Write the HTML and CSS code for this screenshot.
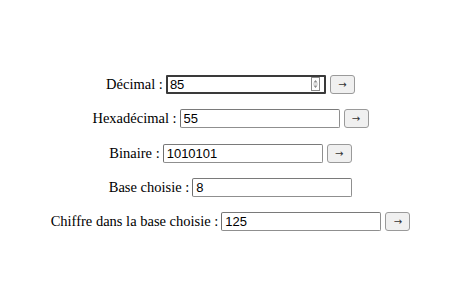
FILE: index.html
```
<!DOCTYPE html>
<html lang="fr">
<head>
<meta charset="utf-8">
<link rel="stylesheet" href="styles.css">
</head>
<body>
<div class="form">
  <div class="row">
    <label class="lbl">Décimal :</label>
    <span class="field focused">
      <input class="inp" type="text" value="85">
      <span class="spin"><svg width="9" height="14" viewBox="0 0 9 14"><rect x="0.5" y="0.5" width="8" height="13" fill="#fff" stroke="#8a8a8a"/><path d="M2.5 5.5 L4.5 3 L6.5 5.5 Z M2.5 8.5 L4.5 11 L6.5 8.5 Z" fill="#8a8a8a"/><line x1="2" y1="7" x2="7" y2="7" stroke="#c0c0c0"/></svg></span>
    </span>
    <button class="btn">→</button>
  </div>
  <div class="row">
    <label class="lbl">Hexadécimal :</label>
    <span class="field"><input class="inp" type="text" value="55"></span>
    <button class="btn">→</button>
  </div>
  <div class="row">
    <label class="lbl">Binaire :</label>
    <span class="field"><input class="inp" type="text" value="1010101"></span>
    <button class="btn">→</button>
  </div>
  <div class="row">
    <label class="lbl">Base choisie :</label>
    <span class="field"><input class="inp" type="text" value="8"></span>
  </div>
  <div class="row">
    <label class="lbl">Chiffre dans la base choisie :</label>
    <span class="field"><input class="inp" type="text" value="125"></span>
    <button class="btn">→</button>
  </div>
</div>
</body>
</html>
```
FILE: styles.css
```
html, body {
  margin: 0;
  padding: 0;
  background: #ffffff;
}
body {
  width: 474px;
  height: 283px;
  overflow: hidden;
  font-family: "Liberation Serif", "Times New Roman", serif;
  font-size: 14.5px;
  color: #000;
}
.form {
  display: flex;
  flex-direction: column;
  align-items: center;
  gap: 15.3px;
  padding-top: 75px;
  padding-right: 13px;
}
.row {
  display: flex;
  align-items: center;
  height: 19px;
}
.lbl {
  margin-right: 3px;
  line-height: 19px;
}
.field {
  position: relative;
  display: block;
  width: 160px;
  height: 19px;
}
.inp {
  box-sizing: border-box;
  width: 160px;
  height: 19px;
  margin: 0;
  padding: 0 3px;
  border: 1px solid #8f8f8f;
  border-top-color: #7a7a7a;
  border-left-color: #6f6f6f;
  border-radius: 2px;
  font-family: "Liberation Sans", Arial, sans-serif;
  font-size: 13px;
  color: #000;
  background: #fff;
  outline: none;
}
.focused .inp {
  border: 2px solid #3a3a3a;
  border-radius: 1px;
  padding: 0 2px;
}
.spin {
  position: absolute;
  right: 6px;
  top: 2px;
  line-height: 0;
}
.btn {
  box-sizing: border-box;
  width: 25px;
  height: 19px;
  margin: 0 0 0 4px;
  padding: 0;
  border: 1px solid #9a9a9a;
  border-radius: 3px;
  background: #f0f0f0;
  font-family: "DejaVu Sans", sans-serif;
  font-size: 10px;
  line-height: 17px;
  color: #333;
}
```
